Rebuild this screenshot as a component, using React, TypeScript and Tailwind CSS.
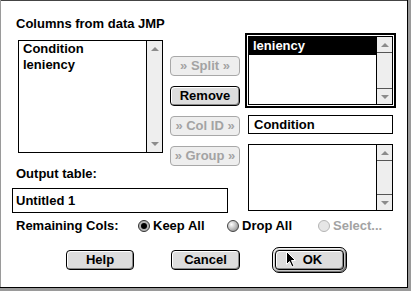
import React from "react";

const font = "font-['Liberation_Sans',Arial,sans-serif]";

function Tri({ down }: { down?: boolean }) {
  return (
    <svg width="8" height="4" viewBox="0 0 8 4" className="block">
      <path d={down ? "M0 0h8L4 4z" : "M0 4h8L4 0z"} fill="#8c8c8c" />
    </svg>
  );
}

function ScrollBar({ lines }: { lines?: boolean }) {
  return (
    <div className="w-[16px] border-l border-black bg-[#eeeeee] flex flex-col">
      <div className={lines ? "h-[16px] border-b border-[#555] flex items-center justify-center" : "h-[16px] flex items-center justify-center"}>
        <Tri />
      </div>
      <div className="flex-1" />
      <div className={lines ? "h-[16px] border-t border-[#555] flex items-center justify-center" : "h-[16px] flex items-center justify-center"}>
        <Tri down />
      </div>
    </div>
  );
}

function MacButton({ label, disabled }: { label: string; disabled?: boolean }) {
  if (disabled) {
    return (
      <div className="h-[20px] w-full rounded-[4px] border border-[#a8a8a8] bg-[#eeeeee] flex items-center justify-center text-[#a3a3a3]">
        {label}
      </div>
    );
  }
  return (
    <div className="h-[20px] w-full rounded-[4px] border border-black bg-[#dddddd] shadow-[inset_1px_1px_0_#fff,inset_-1px_-1px_0_#888] flex items-center justify-center text-black">
      {label}
    </div>
  );
}

function Radio({ state }: { state: "on" | "off" | "disabled" }) {
  if (state === "on") {
    return (
      <span className="w-[12px] h-[12px] rounded-full border border-[#333] bg-[#b5b5b5] flex items-center justify-center">
        <span className="w-[6px] h-[6px] rounded-full bg-black" />
      </span>
    );
  }
  if (state === "off") {
    return (
      <span className="w-[12px] h-[12px] rounded-full border border-[#444] bg-[radial-gradient(circle_at_35%_35%,#ffffff,#b8b8b8_55%,#7a7a7a)]" />
    );
  }
  return <span className="w-[12px] h-[12px] rounded-full border border-[#b5b5b5] bg-[#e6e6e6]" />;
}

export default function App() {
  return (
    <div
      className={`${font} w-[411px] h-[291px] bg-white text-[13px] font-bold text-black leading-[16px] pt-[16px] relative shadow-[inset_-3px_-3px_0_#9a9a9a,inset_-4px_-4px_0_#000,inset_1px_0_0_#9a9a9a,inset_0_1px_0_#444]`}
    >
      {/* top section */}
      <div className="flex items-start">
        {/* left group */}
        <div className="ml-[12px] w-[228px] flex flex-col">
          <div className="flex items-start">
            <div className="ml-[6px] w-[145px] flex flex-col">
              <div className="-ml-[2px] whitespace-nowrap">Columns from data JMP</div>
              <div className="mt-[8px] h-[113px] border border-black flex">
                <div className="flex-1 pl-[4px]">
                  <div>Condition</div>
                  <div>leniency</div>
                </div>
                <ScrollBar />
              </div>
            </div>
            <div className="ml-[7px] mt-[40px] w-[70px] flex flex-col gap-[10px]">
              <MacButton label="» Split »" disabled />
              <MacButton label="Remove" />
              <MacButton label="» Col ID »" disabled />
              <MacButton label="» Group »" disabled />
            </div>
          </div>
          <div className="ml-[4px]">Output table:</div>
          <div className="mt-[6px] h-[25px] w-[216px] border border-black flex items-center pl-[3px]">Untitled 1</div>
        </div>

        {/* right group */}
        <div className="ml-[5px] mt-[17px] w-[151px] flex flex-col items-center">
          <div className="border-2 border-black p-[1px]">
            <div className="w-[145px] h-[69px] border border-black flex">
              <div className="flex-1">
                <div className="h-[18px] leading-[18px] bg-black text-white pl-[4px]">leniency</div>
              </div>
              <ScrollBar lines />
            </div>
          </div>
          <div className="mt-[7px] w-[145px] h-[19px] border border-black flex items-center pl-[5px]">Condition</div>
          <div className="mt-[10px] w-[145px] h-[67px] border border-black flex">
            <div className="flex-1" />
            <ScrollBar lines />
          </div>
        </div>
      </div>

      {/* radios */}
      <div className="mt-[5px] h-[16px] flex items-center">
        <span className="ml-[16px] w-[122px]">Remaining Cols:</span>
        <span className="w-[89px] flex items-center gap-[3px]">
          <Radio state="on" />
          Keep All
        </span>
        <span className="w-[91px] flex items-center gap-[3px]">
          <Radio state="off" />
          Drop All
        </span>
        <span className="flex items-center gap-[3px] text-[#a3a3a3]">
          <Radio state="disabled" />
          Select...
        </span>
      </div>

      {/* bottom buttons */}
      <div className="mt-[13px] h-[26px] flex items-center">
        <div className="ml-[66px] w-[68px]">
          <MacButton label="Help" />
        </div>
        <div className="ml-[37px] w-[69px]">
          <MacButton label="Cancel" />
        </div>
        <div className="ml-[32px] w-[75px] h-[26px] rounded-[7px] border border-black bg-[#c8c8c8] shadow-[inset_1px_1px_0_#f4f4f4,inset_-1px_-1px_0_#777] p-[2px] relative">
          <div className="h-[20px] rounded-[4px] border border-black bg-[#dddddd] shadow-[inset_1px_1px_0_#fff,inset_-1px_-1px_0_#888] flex items-center justify-center pl-[6px]">
            OK
          </div>
          <svg width="11" height="17" viewBox="0 0 11 17" className="absolute left-[13px] top-[3px]">
            <path d="M0.5 0.5 L0.5 13.5 L3.5 10.5 L6 16 L8 15 L5.5 9.5 L9.5 9.5 Z" fill="#000" stroke="#fff" strokeWidth="1" />
          </svg>
        </div>
      </div>
    </div>
  );
}
